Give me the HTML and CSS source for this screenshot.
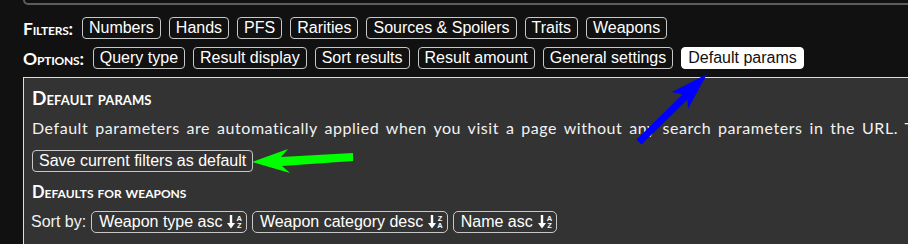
FILE: index.html
```html
<!DOCTYPE html>
<html>
<head>
<meta charset="utf-8">
<link rel="stylesheet" href="styles.css">
</head>
<body>
<div class="page">
  <div class="prev"></div>
  <div class="row">
    <span class="label">Filters:</span>
    <button class="btn">Numbers</button>
    <button class="btn">Hands</button>
    <button class="btn">PFS</button>
    <button class="btn">Rarities</button>
    <button class="btn">Sources &amp; Spoilers</button>
    <button class="btn">Traits</button>
    <button class="btn">Weapons</button>
  </div>
  <div class="row row2">
    <span class="label">Options:</span>
    <button class="btn">Query type</button>
    <button class="btn">Result display</button>
    <button class="btn">Sort results</button>
    <button class="btn">Result amount</button>
    <button class="btn">General settings</button>
    <button class="btn active">Default params</button>
  </div>
  <div class="panel">
    <h2 class="h1">Default params</h2>
    <p class="desc">Default parameters are automatically applied when you visit a page without any search parameters in the URL. This can be used to always have your favourite filters applied.</p>
    <button class="btn save">Save current filters as default</button>
    <h3 class="h2">Defaults for weapons</h3>
    <div class="sortrow">
      <span class="sortlabel">Sort by:</span>
      <button class="btn sbtn">Weapon type asc<span class="ico"><svg class="arr" width="8" height="14" viewBox="0 0 8 14"><path d="M2.8 0h2.4v8h2.8L4 13.5 0 8h2.8z" fill="#ffffff"/></svg><span class="az"><span>A</span><span>Z</span></span></span></button>
      <button class="btn sbtn">Weapon category desc<span class="ico"><svg class="arr" width="8" height="14" viewBox="0 0 8 14"><path d="M2.8 0h2.4v8h2.8L4 13.5 0 8h2.8z" fill="#ffffff"/></svg><span class="az"><span>Z</span><span>A</span></span></span></button>
      <button class="btn sbtn">Name asc<span class="ico"><svg class="arr" width="8" height="14" viewBox="0 0 8 14"><path d="M2.8 0h2.4v8h2.8L4 13.5 0 8h2.8z" fill="#ffffff"/></svg><span class="az"><span>A</span><span>Z</span></span></span></button>
    </div>
  </div>
  <svg class="notes" width="908" height="244" viewBox="0 0 908 244">
    <polygon fill="#00ff00" points="252,162 288,149 281,157 353,153 353,161 282,166 290,173"/>
    <polygon fill="#0000ff" points="707,74 672,92 682.5,94.5 636.5,139.5 641.5,144.5 687.5,99.5 688,109"/>
  </svg>
</div>
</body>
</html>
```
FILE: styles.css
```css
html, body {
  margin: 0;
  padding: 0;
  background: #111111;
  overflow: hidden;
  width: 908px;
  height: 244px;
}
.page {
  position: relative;
  width: 1200px;
  height: 244px;
  padding-left: 23px;
  font-family: Lato, "DejaVu Sans", sans-serif;
  color: #f2f2f2;
}
.prev {
  height: 3px;
  border: 2px solid #5c5c5c;
  border-top: 0;
  border-radius: 0 0 6px 6px;
}
.row {
  display: flex;
  align-items: center;
  gap: 8px;
  margin-top: 12px;
  height: 22px;
}
.row2 {
  margin-top: 8px;
}
.label {
  font-weight: bold;
  font-variant: small-caps;
  font-size: 17.5px;
  letter-spacing: -0.2px;
  margin-right: 1px;
  color: #ffffff;
}
.btn {
  font-family: "Liberation Sans", Arial, sans-serif;
  font-size: 16px;
  line-height: 18px;
  color: #ffffff;
  background: transparent;
  border: 1px solid #c8c8c8;
  border-radius: 4px;
  padding: 1px 6px;
  margin: 0;
  height: 22px;
  white-space: nowrap;
}
.btn.active {
  background: #ffffff;
  color: #111111;
  border-color: #ffffff;
}
.panel {
  margin-top: 8px;
  border-top: 1px solid #dddddd;
  border-left: 1px solid #dddddd;
  background: #333333;
  padding: 8px 0 0 8px;
  height: 200px;
}
.h1 {
  margin: 0;
  font-size: 19px;
  line-height: 24px;
  font-weight: bold;
  font-variant: small-caps;
  letter-spacing: 0.1px;
  color: #ffffff;
}
.desc {
  margin: 8px 0 0 0;
  font-size: 16px;
  line-height: 20px;
  letter-spacing: 0.55px;
  word-spacing: 2.3px;
  white-space: nowrap;
}
.save {
  display: block;
  margin-top: 12px;
}
.h2 {
  margin: 10px 0 0 0;
  font-size: 16.5px;
  line-height: 20px;
  font-weight: bold;
  font-variant: small-caps;
  color: #ffffff;
}
.sortrow {
  display: flex;
  align-items: center;
  gap: 5px;
  margin-top: 9px;
}
.sortlabel {
  font-family: "Liberation Sans", Arial, sans-serif;
  font-size: 16px;
  margin-left: -1px;
}
.sbtn {
  display: inline-flex;
  align-items: center;
  gap: 5px;
  border-radius: 5px;
  padding: 1px 4px 1px 7px;
}
.ico {
  display: inline-flex;
  align-items: center;
  gap: 1px;
}
.arr {
  display: block;
}
.az {
  display: flex;
  flex-direction: column;
  align-items: center;
  font-size: 7.5px;
  line-height: 7.5px;
  font-weight: bold;
}
.notes {
  position: absolute;
  left: 0;
  top: 0;
  pointer-events: none;
}
```
